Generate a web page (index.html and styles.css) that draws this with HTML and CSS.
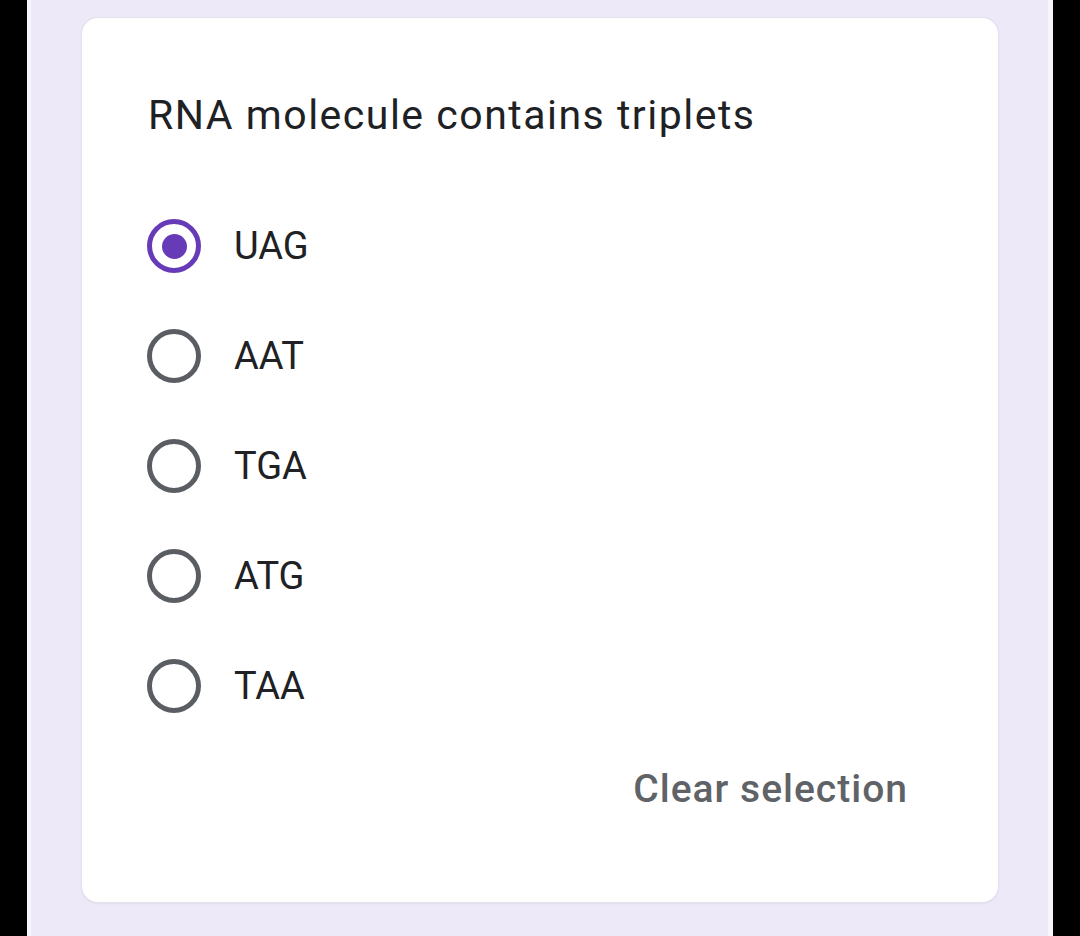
FILE: index.html
```html
<!DOCTYPE html>
<html lang="en">
<head>
<meta charset="utf-8">
<title>RNA molecule contains triplets</title>
<link rel="stylesheet" href="styles.css">
</head>
<body>
<div class="screen">
  <div class="bezel"></div>
  <div class="edge"></div>
  <main class="page">
    <section class="card">
      <h1 class="question">RNA molecule contains triplets</h1>
      <div class="options">
        <label class="option"><span class="radio checked"><span class="dot"></span></span><span class="label">UAG</span></label>
        <label class="option"><span class="radio"></span><span class="label">AAT</span></label>
        <label class="option"><span class="radio"></span><span class="label">TGA</span></label>
        <label class="option"><span class="radio"></span><span class="label">ATG</span></label>
        <label class="option"><span class="radio"></span><span class="label">TAA</span></label>
      </div>
      <div class="clear">Clear selection</div>
    </section>
  </main>
  <div class="edge edge-right"></div>
  <div class="bezel"></div>
</div>
</body>
</html>
```
FILE: styles.css
```css
html, body {
  margin: 0;
  padding: 0;
  height: 100%;
}
body {
  font-family: Roboto, "Liberation Sans", sans-serif;
  color: #202124;
  background: #000;
}
.screen {
  display: flex;
  height: 936px;
  overflow: hidden;
}
.bezel {
  width: 27px;
  background: #000;
  flex: none;
}
.edge {
  width: 4px;
  background: #f6f5fa;
  flex: none;
}
.edge-right {
  width: 5px;
}
.page {
  flex: 1;
  background: #ede9f8;
  padding: 18px 50px 0 51px;
}
.card {
  background: #fff;
  border-radius: 16px;
  height: 884px;
  box-sizing: border-box;
  box-shadow: 0 0 0 1px #e4e2ea, 0 1px 3px rgba(60, 64, 67, 0.12);
  padding: 73px 90px 0 65px;
  display: flex;
  flex-direction: column;
}
.question {
  margin: 0;
  font-size: 41px;
  line-height: 48px;
  font-weight: 400;
  letter-spacing: 1.5px;
  color: #202124;
  padding-left: 1px;
}
.options {
  margin-top: 52px;
  display: flex;
  flex-direction: column;
}
.option {
  height: 110px;
  display: flex;
  align-items: center;
  gap: 33px;
}
.radio {
  width: 54px;
  height: 54px;
  box-sizing: border-box;
  border: 5px solid #5a5e63;
  border-radius: 50%;
  display: flex;
  align-items: center;
  justify-content: center;
  flex: none;
}
.radio.checked {
  border-color: #673ab7;
}
.dot {
  width: 25px;
  height: 25px;
  border-radius: 50%;
  background: #673ab7;
}
.label {
  font-size: 38px;
  line-height: 44px;
  color: #202124;
}
.clear {
  align-self: flex-end;
  margin-top: 26px;
  margin-right: 0;
  font-size: 39px;
  line-height: 44px;
  font-weight: 500;
  letter-spacing: 1px;
  color: #5f6368;
}
```
